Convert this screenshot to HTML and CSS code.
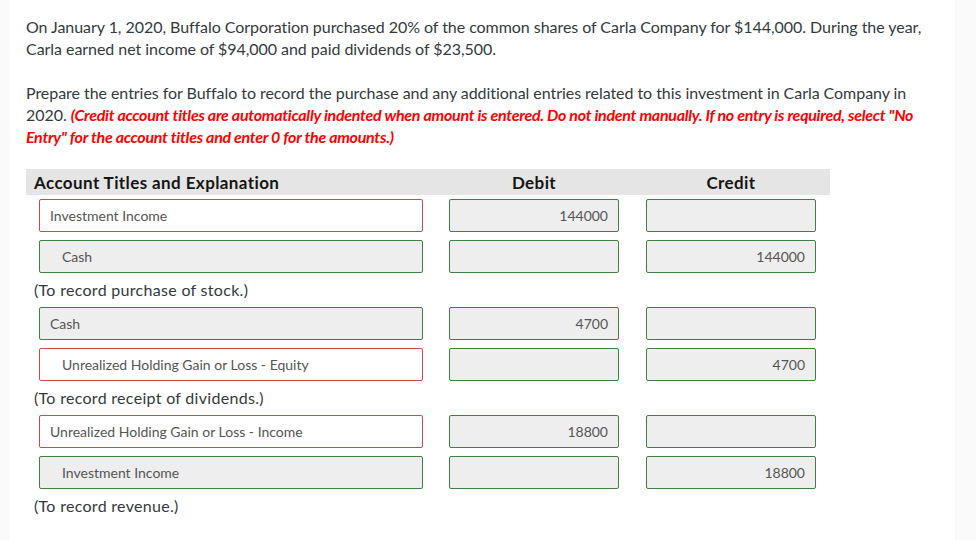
FILE: index.html
```html
<!DOCTYPE html>
<html lang="en">
<head>
<meta charset="utf-8">
<title>Journal entries</title>
<link rel="stylesheet" href="styles.css">
</head>
<body>
<div class="strip strip-left"></div>
<main class="main">
  <p class="intro">On January 1, 2020, Buffalo Corporation purchased 20% of the common shares of Carla Company for $144,000. During the year, Carla earned net income of $94,000 and paid dividends of $23,500.</p>
  <p class="task">Prepare the entries for Buffalo to record the purchase and any additional entries related to this investment in Carla Company in 2020. <em class="note">(Credit account titles are automatically indented when amount is entered. Do not indent manually. If no entry is required, select "No Entry" for the account titles and enter 0 for the amounts.)</em></p>

  <div class="journal">
    <div class="head">
      <div class="h-acc">Account Titles and Explanation</div>
      <div class="h-num">Debit</div>
      <div class="h-num">Credit</div>
    </div>

    <div class="row">
      <div class="box acc bad">Investment Income</div>
      <div class="box num ok">144000</div>
      <div class="box num ok"></div>
    </div>
    <div class="row">
      <div class="box acc ok indent">Cash</div>
      <div class="box num ok"></div>
      <div class="box num ok">144000</div>
    </div>
    <div class="explain">(To record purchase of stock.)</div>

    <div class="row">
      <div class="box acc ok">Cash</div>
      <div class="box num ok">4700</div>
      <div class="box num ok"></div>
    </div>
    <div class="row">
      <div class="box acc bad indent">Unrealized Holding Gain or Loss - Equity</div>
      <div class="box num ok"></div>
      <div class="box num ok">4700</div>
    </div>
    <div class="explain">(To record receipt of dividends.)</div>

    <div class="row">
      <div class="box acc bad">Unrealized Holding Gain or Loss - Income</div>
      <div class="box num ok">18800</div>
      <div class="box num ok"></div>
    </div>
    <div class="row">
      <div class="box acc ok indent">Investment Income</div>
      <div class="box num ok"></div>
      <div class="box num ok">18800</div>
    </div>
    <div class="explain">(To record revenue.)</div>
  </div>
</main>
<div class="strip strip-right"></div>
</body>
</html>
```

FILE: styles.css
```css
html, body {
  margin: 0;
  padding: 0;
  background: #ffffff;
}
body {
  display: flex;
  min-height: 540px;
  font-family: Lato, "Open Sans", Arial, sans-serif;
  color: #333a40;
  overflow: hidden;
}
.strip {
  background: #fafafa;
  flex: none;
}
.strip-left { width: 10px; }
.strip-right { width: 21px; }
.main {
  flex: 1;
  padding: 16px 0 0 16px;
}
.intro, .task {
  margin: 0;
  font-size: 16px;
  letter-spacing: -0.05px;
  width: 900px;
}
.intro { line-height: 21.5px; }
.task {
  margin-top: 23px;
  line-height: 22px;
}
.note {
  color: #ff0000;
  font-weight: 700;
  font-style: italic;
  letter-spacing: -0.28px;
}
.journal {
  margin-top: 21px;
  width: 804px;
}
.head {
  display: grid;
  grid-template-columns: 410px 196px 198px;
  height: 26px;
  align-items: center;
  background: #e5e5e5;
  font-size: 17px;
  letter-spacing: 0.4px;
  font-weight: 700;
  color: #151515;
}
.h-acc { padding-left: 8px; }
.h-num { text-align: center; }
.row {
  display: grid;
  grid-template-columns: 410px 196px 198px;
  margin-top: 8px;
}
.head + .row { margin-top: 4px; }
.box {
  box-sizing: border-box;
  height: 33px;
  margin: 0 13px;
  border: 1px solid #3f7f3f;
  border-radius: 2px;
  background: #eeeeee;
  font-size: 14px;
  line-height: 31px;
  color: #555;
  padding: 0 10px;
  white-space: nowrap;
}
.row .box:last-child { margin: 0 14px; }
.acc.bad {
  border-color: #c0504d;
  background: #ffffff;
}
.acc.indent { padding-left: 22px; }
.num { text-align: right; }
.explain {
  height: 26px;
  line-height: 34px;
  padding-left: 8px;
  font-size: 16px;
  letter-spacing: 0.3px;
  color: #333a40;
}
```
